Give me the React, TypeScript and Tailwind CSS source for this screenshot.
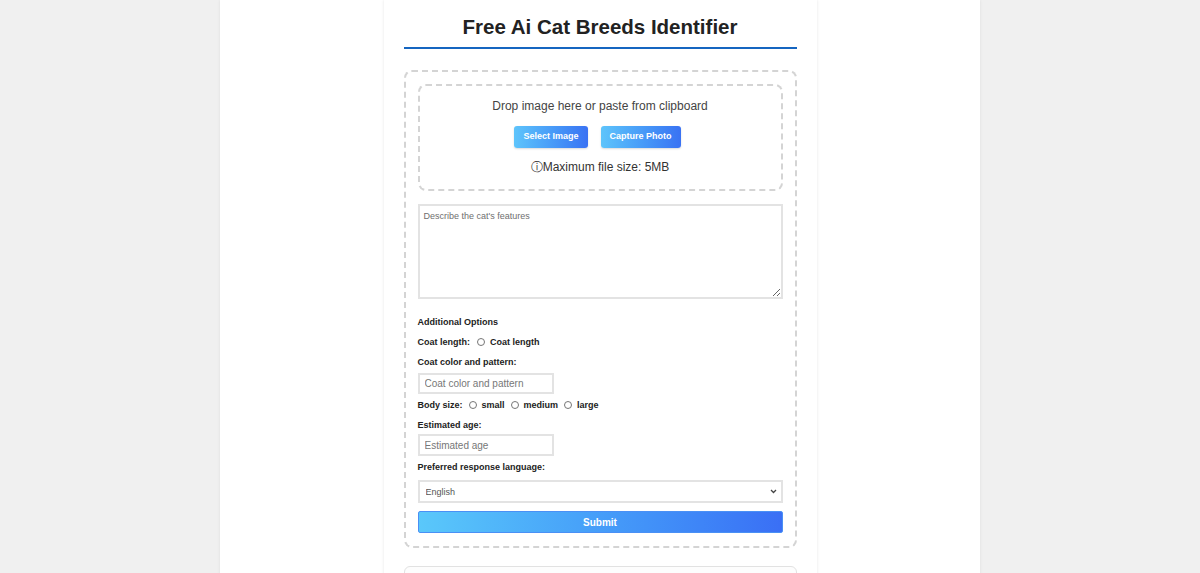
import React from "react";

const font = { fontFamily: '"Liberation Sans", Arial, sans-serif' };

const Radio = ({ label }: { label: string }) => (
  <label className="flex items-center">
    <span className="w-[8px] h-[8px] rounded-full border border-[#767676] bg-white" />
    <span className="ml-[5px]">{label}</span>
  </label>
);

const App: React.FC = () => {
  return (
    <div className="min-h-screen bg-[#f0f0f0] flex justify-center text-[#222]" style={font}>
      <div className="w-[760px] min-h-screen bg-white shadow-[0_0_3px_rgba(0,0,0,0.08)] flex justify-center">
        <div className="w-[433px] min-h-screen bg-white shadow-[0_0_3px_rgba(0,0,0,0.1)] px-[20px] pt-[15px]">
          <h1 className="text-center text-[20.5px] leading-[24px] font-bold text-[#222] pb-[8px] border-b-2 border-[#1565c0]">
            Free Ai Cat Breeds Identifier
          </h1>

          <div className="mt-[21px] border-2 border-dashed border-[#d4d4d4] rounded-lg px-[12px] pt-[12px] pb-[13px]">
            {/* drop zone */}
            <div className="border-2 border-dashed border-[#d4d4d4] rounded-lg pt-[13px] pb-[15px] flex flex-col items-center">
              <p className="text-[12px] leading-[14px] text-[#444]">Drop image here or paste from clipboard</p>
              <div className="mt-[13px] mr-[5px] flex gap-[13px]">
                <button className="h-[22px] px-[9px] rounded-[3px] text-white text-[9px] font-bold bg-gradient-to-r from-[#5ec4fb] to-[#3a72f3] shadow-[0_1px_2px_rgba(0,0,0,0.15)]">
                  Select Image
                </button>
                <button className="h-[22px] px-[9px] rounded-[3px] text-white text-[9px] font-bold bg-gradient-to-r from-[#5ec4fb] to-[#3a72f3] shadow-[0_1px_2px_rgba(0,0,0,0.15)]">
                  Capture Photo
                </button>
              </div>
              <p className="mt-[12px] text-[12px] leading-[14px] text-[#333]">ⓘMaximum file size: 5MB</p>
            </div>

            <textarea
              className="mt-[13px] block w-full h-[95px] border-2 border-[#e3e3e3] px-[4px] py-[5px] text-[9px] leading-[11px] outline-none placeholder:text-[#6f6f6f]"
              placeholder="Describe the cat's features"
              style={font}
            />

            <div className="text-[9px] font-bold leading-[12px]">
              <div className="mt-[17px]">Additional Options</div>

              <div className="mt-[8px] flex items-center gap-[7px] h-[12px]">
                <span>Coat length:</span>
                <Radio label="Coat length" />
              </div>

              <div className="mt-[8px]">Coat color and pattern:</div>
              <input
                className="mt-[5px] block w-[136px] h-[21px] border-2 border-[#e3e3e3] px-[5px] text-[10px] font-normal outline-none placeholder:text-[#777]"
                placeholder="Coat color and pattern"
                style={font}
              />

              <div className="mt-[5px] flex items-center gap-[6px] h-[12px]">
                <span>Body size:</span>
                <Radio label="small" />
                <Radio label="medium" />
                <Radio label="large" />
              </div>

              <div className="mt-[8px]">Estimated age:</div>
              <input
                className="mt-[3px] block w-[136px] h-[22px] border-2 border-[#e3e3e3] px-[5px] text-[10px] font-normal outline-none placeholder:text-[#777]"
                placeholder="Estimated age"
                style={font}
              />

              <div className="mt-[5px]">Preferred response language:</div>
              <div className="mt-[7px] relative">
                <select
                  className="block w-full h-[23px] appearance-none border-2 border-[#e3e3e3] bg-white px-[6px] text-[9px] font-normal text-[#555] outline-none"
                  style={font}
                  defaultValue="English"
                >
                  <option>English</option>
                </select>
                <svg className="absolute right-[6px] top-[9px] pointer-events-none" width="7" height="5" viewBox="0 0 7 5">
                  <path d="M1 1 L3.5 3.5 L6 1" fill="none" stroke="#444" strokeWidth="1.3" />
                </svg>
              </div>
            </div>

            <button className="mt-[8px] block w-full h-[22px] rounded-[2px] text-white text-[10px] font-bold bg-gradient-to-r from-[#5ac8fa] to-[#3a6ff5] border border-[#4a90f5]">
              Submit
            </button>
          </div>

          <div className="mt-[18px] h-[80px] border border-[#e2e2e2] rounded-md bg-[#fdfdfd]" />
        </div>
      </div>
    </div>
  );
};

export default App;
